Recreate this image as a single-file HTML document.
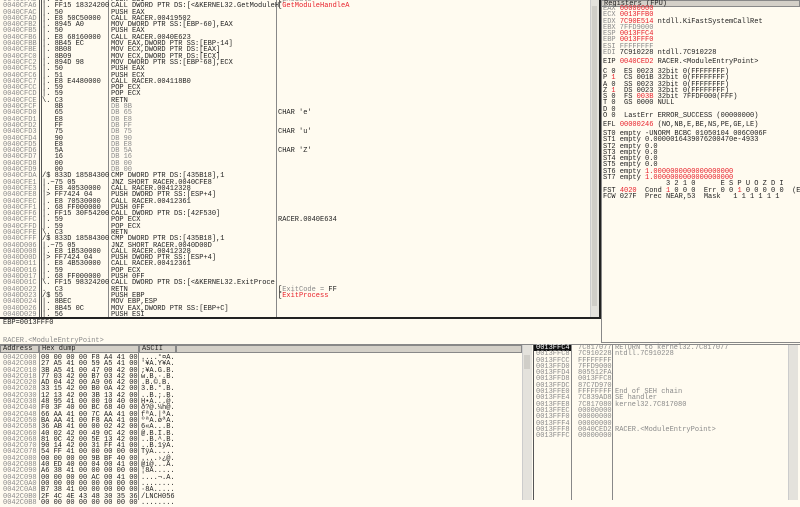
<!DOCTYPE html>
<html><head><meta charset="utf-8"><style>
*{margin:0;padding:0;box-sizing:border-box}
body{width:800px;height:500px;overflow:hidden;background:#fffbf0;position:relative;font-family:"Liberation Mono",monospace;font-size:7px;color:#222}
pre{position:absolute;font-family:"Liberation Mono",monospace;font-size:7px;line-height:6.3px;white-space:pre}
.g{color:#8a8a8a}.r{color:#e8202a}.k{color:#000}
.vl{position:absolute;background:#888;width:1px}
.hl{position:absolute;background:#888;height:1px}
.sb{position:absolute;background:#e4e2dc;border-left:1px solid #ccc}
.hdr{position:absolute;background:#d4d0c8;border:1px solid #888;font-size:7px;line-height:7px;padding-left:2px}
</style></head><body>
<!-- disassembly pane -->
<div style="position:absolute;left:0;top:0;width:601px;height:319px;border-right:2px solid #222;border-bottom:2px solid #222"></div>
<div class="vl" style="left:39px;top:0;height:317px;background:#555"></div>
<div class="vl" style="left:41px;top:0;height:317px;background:#555"></div>
<div class="vl" style="left:108px;top:0;height:317px"></div>
<div class="vl" style="left:276px;top:0;height:317px"></div>
<div class="sb" style="left:590px;top:0;width:9px;height:317px"></div>
<div style="position:absolute;left:592px;top:6px;width:5px;height:300px;background:#d0cec8"></div>
<pre class="g" style="left:3px;top:-3px">0040CFA5
0040CFA6
0040CFAC
0040CFAD
0040CFB2
0040CFB5
0040CFB6
0040CFBB
0040CFBE
0040CFC0
0040CFC2
0040CFC5
0040CFC6
0040CFC7
0040CFCC
0040CFCD
0040CFCE
0040CFCF
0040CFD0
0040CFD1
0040CFD2
0040CFD3
0040CFD4
0040CFD5
0040CFD6
0040CFD7
0040CFD8
0040CFD9
0040CFDA
0040CFE1
0040CFE3
0040CFE8
0040CFEC
0040CFF1
0040CFF6
0040CFFC
0040CFFD
0040CFFE
0040CFFF
0040D006
0040D008
0040D00D
0040D011
0040D016
0040D017
0040D01C
0040D022
0040D023
0040D024
0040D026
0040D029</pre>
<pre style="left:42px;top:-3px">|. 56
|. FF15 18324200
|. 50
|. E8 50C50000
|. 8945 A0
|. 50
|. E8 68160000
|. 8B45 EC
|. 8B08
|. 8B09
|. 894D 98
|. 50
|. 51
|. E8 E4480000
|. 59
|. 59
\. C3
   8B
   65
   E8
   FF
   75
   90
   E8
   5A
   16
   00
   00
/$ 833D 18584300
|.~75 05
|. E8 40530000
|> FF7424 04
|. E8 70530000
|. 68 FF000000
|. FF15 30F54200
|. 59
|. 59
\. C3
/$ 833D 18584300
|.~75 05
|. E8 1B530000
|> FF7424 04
|. E8 4B530000
|. 59
|. 68 FF000000
\. FF15 98324200
.  C3
/$ 55
|. 8BEC
|. 8B45 0C
|. 56</pre>
<pre style="left:111px;top:-3px">PUSH ESI
CALL DWORD PTR DS:[&lt;&amp;KERNEL32.GetModuleH
PUSH EAX
CALL RACER.00419502
MOV DWORD PTR SS:[EBP-60],EAX
PUSH EAX
CALL RACER.0040E623
MOV EAX,DWORD PTR SS:[EBP-14]
MOV ECX,DWORD PTR DS:[EAX]
MOV ECX,DWORD PTR DS:[ECX]
MOV DWORD PTR SS:[EBP-68],ECX
PUSH EAX
PUSH ECX
CALL RACER.004118B0
POP ECX
POP ECX
RETN
<span class="g">DB 8B</span>
<span class="g">DB 65</span>
<span class="g">DB E8</span>
<span class="g">DB FF</span>
<span class="g">DB 75</span>
<span class="g">DB 90</span>
<span class="g">DB E8</span>
<span class="g">DB 5A</span>
<span class="g">DB 16</span>
<span class="g">DB 00</span>
<span class="g">DB 00</span>
CMP DWORD PTR DS:[435B18],1
JNZ SHORT RACER.0040CFE8
CALL RACER.00412328
PUSH DWORD PTR SS:[ESP+4]
CALL RACER.00412361
PUSH 0FF
CALL DWORD PTR DS:[42F530]
POP ECX
POP ECX
RETN
CMP DWORD PTR DS:[435B18],1
JNZ SHORT RACER.0040D00D
CALL RACER.00412328
PUSH DWORD PTR SS:[ESP+4]
CALL RACER.00412361
POP ECX
PUSH 0FF
CALL DWORD PTR DS:[&lt;&amp;KERNEL32.ExitProce
RETN
PUSH EBP
MOV EBP,ESP
MOV EAX,DWORD PTR SS:[EBP+C]
PUSH ESI</pre>
<pre style="left:278px;top:-3px"><span class="k">[</span><span class="g">pModule</span>
<span class="k">[</span><span class="r">GetModuleHandleA</span>
















CHAR 'e'


CHAR 'u'


CHAR 'Z'










RACER.0040E634










<span class="k">[</span><span class="g">ExitCode = </span>FF
<span class="k">[</span><span class="r">ExitProcess</span></pre>
<!-- info pane -->
<pre style="left:3px;top:320px">EBP=0013FFF0</pre>
<pre class="g" style="left:3px;top:338px">RACER.&lt;ModuleEntryPoint&gt;</pre>
<!-- registers pane -->
<div style="position:absolute;left:601px;top:0;width:199px;height:343px;border-left:1px solid #888;border-bottom:1px solid #888"></div>
<div class="hdr" style="left:601px;top:0;width:199px;height:7px;line-height:6px">Registers (FPU)</div>
<pre style="left:603px;top:6px"><span class="g">EAX</span> <span class="r">00000000</span>
<span class="g">ECX</span> <span class="r">0013FFB0</span>
<span class="g">EDX</span> <span class="r">7C90E514</span> ntdll.KiFastSystemCallRet
<span class="g">EBX 7FFD9000</span>
<span class="g">ESP</span> <span class="r">0013FFC4</span>
<span class="g">EBP</span> <span class="r">0013FFF0</span>
<span class="g">ESI FFFFFFFF</span>
<span class="g">EDI</span> 7C910228 ntdll.7C910228</pre>
<pre style="left:603px;top:59px">EIP <span class="r">0040CED2</span> RACER.&lt;ModuleEntryPoint&gt;</pre>
<pre style="left:603px;top:69px">C 0  ES 0023 32bit 0(FFFFFFFF)
P <span class="r">1</span>  CS 001B 32bit 0(FFFFFFFF)
A 0  SS 0023 32bit 0(FFFFFFFF)
Z <span class="r">1</span>  DS 0023 32bit 0(FFFFFFFF)
S 0  FS <span class="r">003B</span> 32bit 7FFDF000(FFF)
T 0  GS 0000 NULL
D 0
O 0  LastErr ERROR_SUCCESS (00000000)</pre>
<pre style="left:603px;top:122px">EFL <span class="r">00000246</span> (NO,NB,E,BE,NS,PE,GE,LE)</pre>
<pre style="left:603px;top:131px">ST0 empty -UNORM BCBC 01050104 006C006F
ST1 empty 0.0000016439076200470e-4933
ST2 empty 0.0
ST3 empty 0.0
ST4 empty 0.0
ST5 empty 0.0
ST6 empty <span class="r">1.0000000000000000000</span>
ST7 empty <span class="r">1.0000000000000000000</span>
               3 2 1 0      E S P U O Z D I
FST <span class="r">4020</span>  Cond <span class="r">1</span> 0 0 0  Err 0 0 <span class="r">1</span> 0 0 0 0 0  (E
FCW 027F  Prec NEAR,53  Mask   1 1 1 1 1 1</pre>
<!-- dump pane -->
<div style="position:absolute;left:0;top:344px;width:800px;height:1px;background:#888"></div>
<div class="hdr" style="left:0;top:345px;width:39px;height:8px">Address</div>
<div class="hdr" style="left:39px;top:345px;width:100px;height:8px">Hex dump</div>
<div class="hdr" style="left:139px;top:345px;width:37px;height:8px">ASCII</div>
<div class="hdr" style="left:176px;top:345px;width:346px;height:8px"></div>
<div class="vl" style="left:39px;top:353px;height:147px"></div>
<div class="vl" style="left:138px;top:353px;height:147px"></div>
<div class="sb" style="left:522px;top:345px;width:10px;height:155px"></div>
<div style="position:absolute;left:524px;top:355px;width:6px;height:14px;background:#d0cec8"></div>
<pre class="g" style="left:3px;top:355px">0042C000
0042C008
0042C010
0042C018
0042C020
0042C028
0042C030
0042C038
0042C040
0042C048
0042C050
0042C058
0042C060
0042C068
0042C070
0042C078
0042C080
0042C088
0042C090
0042C098
0042C0A0
0042C0A8
0042C0B0
0042C0B8</pre>
<pre style="left:41px;top:355px">00 00 00 00 F8 A4 41 00
27 A5 41 00 59 A5 41 00
3B A5 41 00 47 00 42 00
77 03 42 00 B7 03 42 00
AD 04 42 00 A9 06 42 00
33 15 42 00 B0 0A 42 00
12 13 42 00 3B 13 42 00
48 95 41 00 00 10 40 00
F0 3F 40 00 BC 68 40 00
66 AA 41 00 7C AA 41 00
BA AA 41 00 F8 AA 41 00
36 AB 41 00 00 02 42 00
40 02 42 00 49 0C 42 00
81 0C 42 00 5E 13 42 00
90 14 42 00 31 FF 41 00
54 FF 41 00 00 00 00 00
00 00 00 00 9B BF 40 00
40 ED 40 00 04 00 41 00
A6 38 41 00 00 00 00 00
00 00 00 00 AC 00 41 00
00 00 00 00 00 00 00 00
B7 38 41 00 00 00 00 00
2F 4C 4E 43 48 30 35 36
00 00 00 00 00 00 00 00</pre>
<pre style="left:141px;top:355px">....°¤A.
'¥A.Y¥A.
;¥A.G.B.
w.B.·.B.
­.B.©.B.
3.B.°.B.
..B.;.B.
H•A...@.
ð?@.¼h@.
fªA.|ªA.
ºªA.øªA.
6«A...B.
@.B.I.B.
..B.^.B.
..B.1ÿA.
TÿA.....
....›¿@.
@í@...A.
¦8A.....
....¬.A.
........
·8A.....
/LNCH056
........</pre>
<!-- stack pane -->
<div class="vl" style="left:533px;top:345px;height:155px;background:#555"></div>
<div class="vl" style="left:571px;top:345px;height:155px"></div>
<div class="vl" style="left:612px;top:345px;height:155px"></div>
<div class="sb" style="left:788px;top:345px;width:10px;height:155px"></div>
<div style="position:absolute;left:534px;top:345px;width:37px;height:6px;background:#111"></div>
<pre class="g" style="left:536px;top:345px"><span style="color:#fff">0013FFC4</span>
0013FFC8
0013FFCC
0013FFD0
0013FFD4
0013FFD8
0013FFDC
0013FFE0
0013FFE4
0013FFE8
0013FFEC
0013FFF0
0013FFF4
0013FFF8
0013FFFC</pre>
<pre class="g" style="left:578px;top:345px">7C817077
7C910228
FFFFFFFF
7FFD9000
805512FA
0013FFC8
87C7D970
FFFFFFFF
7C839AD8
7C817080
00000000
00000000
00000000
0040CED2
00000000</pre>
<pre class="g" style="left:615px;top:345px">RETURN to kernel32.7C817077
ntdll.7C910228





End of SEH chain
SE handler
kernel32.7C817080



RACER.&lt;ModuleEntryPoint&gt;</pre>
</body></html>
